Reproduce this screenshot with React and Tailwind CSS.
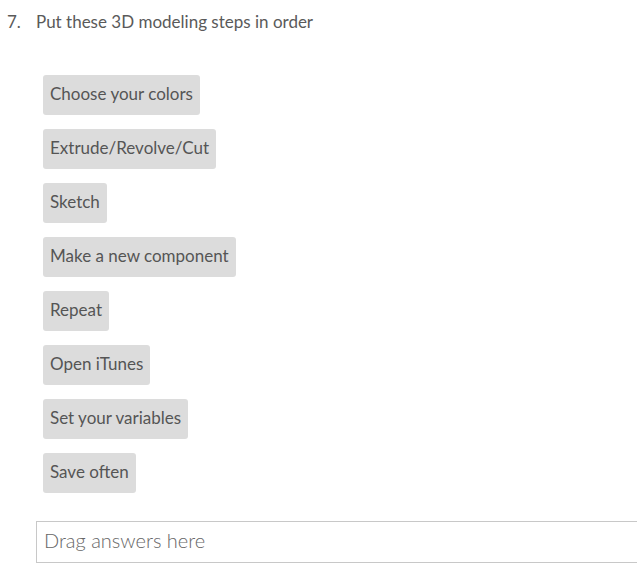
const items = [
  "Choose your colors",
  "Extrude/Revolve/Cut",
  "Sketch",
  "Make a new component",
  "Repeat",
  "Open iTunes",
  "Set your variables",
  "Save often",
];

export default function App() {
  return (
    <div className="min-h-[582px] w-[637px] overflow-hidden bg-white text-[#555] font-['Lato','Open_Sans',sans-serif]">
      <div className="flex pt-[10px] text-[17px] leading-[24px] text-[#5a5a5a]">
        <span className="w-[36px] pl-[7px]">7.</span>
        <span>Put these 3D modeling steps in order</span>
      </div>
      <div className="mt-[41px] flex flex-col items-start gap-[14px] pl-[43px]">
        {items.map((t) => (
          <div
            key={t}
            className="flex h-[40px] items-center rounded-[3px] bg-[#dcdcdc] px-[7px] pb-[3px] text-[17px] text-[#555]"
          >
            {t}
          </div>
        ))}
      </div>
      <div className="ml-[36px] mt-[28px] flex h-[42px] w-[620px] items-center border border-[#c8c8c8] px-[7px] pb-[5px] text-[20px] font-light text-[#666]">
        Drag answers here
      </div>
    </div>
  );
}
